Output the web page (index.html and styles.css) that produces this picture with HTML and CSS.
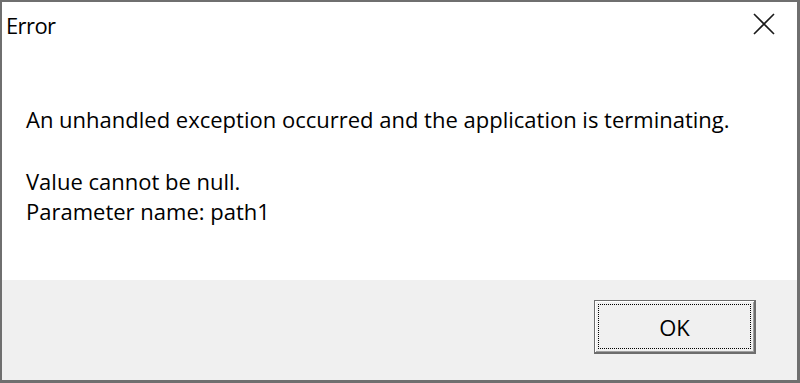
FILE: index.html
```html
<!DOCTYPE html>
<html>
<head>
<meta charset="utf-8">
<link rel="stylesheet" href="styles.css">
</head>
<body>
<div class="window">
  <div class="titlebar">
    <span class="title">Error</span>
    <span class="close">
      <svg width="22" height="22" viewBox="0 0 22 22"><path d="M1 1 L21 21 M21 1 L1 21" stroke="#1a1a1a" stroke-width="1.6" fill="none"/></svg>
    </span>
  </div>
  <div class="content">
    <p class="msg">An unhandled exception occurred and the application is terminating.</p>
    <p class="msg">Value cannot be null.<br>Parameter name: path1</p>
  </div>
  <div class="footer">
    <button class="btn"><span class="focus">OK</span></button>
  </div>
</div>
</body>
</html>
```
FILE: styles.css
```css
html, body {
  margin: 0;
  padding: 0;
  background: #fff;
}
body {
  font-family: "Open Sans", "Noto Sans", sans-serif;
  color: #000;
}
.window {
  width: 800px;
  height: 383px;
  box-sizing: border-box;
  border: 2px solid #6f6f6f;
  border-right-width: 3px;
  border-bottom-width: 3px;
  display: flex;
  flex-direction: column;
  background: #fff;
}
.titlebar {
  height: 46px;
  display: flex;
  justify-content: space-between;
  align-items: center;
  padding-left: 4px;
  padding-right: 22px;
}
.title {
  font-size: 22px;
  letter-spacing: -0.6px;
}
.close {
  display: flex;
  margin-top: -2px;
}
.content {
  flex: 1;
  padding: 56px 0 0 24px;
}
.msg {
  margin: 0 0 32px 0;
  font-size: 22px;
  line-height: 30px;
}
.footer {
  height: 100px;
  background: #f0f0f0;
  display: flex;
  justify-content: flex-end;
  align-items: flex-start;
  padding: 20px 41px 0 0;
  box-sizing: border-box;
}
.btn {
  width: 162px;
  height: 54px;
  box-sizing: border-box;
  margin: 0;
  padding: 3px;
  background: #f0f0f0;
  border: 1px solid #6d6d6d;
  border-right-width: 2px;
  border-bottom-width: 2px;
  box-shadow: inset 1px 1px 0 #ffffff, inset -1px -1px 0 #a0a0a0;
  font-family: "Open Sans", "Noto Sans", sans-serif;
  font-size: 22px;
  color: #000;
  display: flex;
}
.focus {
  flex: 1;
  border: 1px dotted #000;
  display: flex;
  align-items: center;
  justify-content: center;
}
```
